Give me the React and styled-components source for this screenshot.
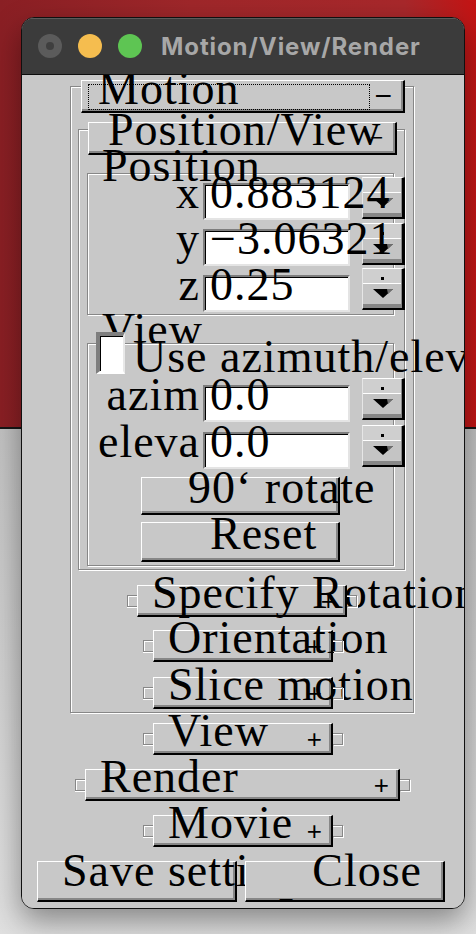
import React from 'react';
import styled, { createGlobalStyle } from 'styled-components';

const SERIF = `'Liberation Serif', 'Times New Roman', serif`;
const SANS = `'Liberation Sans', Arial, sans-serif`;

const GlobalStyle = createGlobalStyle`
  html, body { margin: 0; padding: 0; }
  body { background: #d0d0d0; }
  #root { width: 476px; height: 934px; }
`;

const Desktop = styled.div`
  width: 476px;
  height: 934px;
  box-sizing: border-box;
  padding: 17px 0 0 21px;
  overflow: hidden;
  background:
    linear-gradient(to bottom, transparent 427px, #161616 427px, #161616 429px, transparent 429px),
    linear-gradient(to bottom, transparent 429px, #c2c2c2 429px, #e0e0e0 934px),
    linear-gradient(to right, #8a1f24 0%, #9f272a 40%, #a8282b 85%, #c41414 100%);
`;

const Window = styled.div`
  width: 444px;
  height: 892px;
  box-sizing: border-box;
  border: 1px solid #101010;
  border-radius: 13px;
  overflow: hidden;
  background: #c8c8c8;
  display: flex;
  flex-direction: column;
  box-shadow: 0 12px 30px rgba(0, 0, 0, 0.4);
`;

const TitleBar = styled.div`
  height: 57px;
  flex: none;
  box-sizing: border-box;
  display: flex;
  align-items: center;
  gap: 16px;
  padding-left: 16px;
  background: #3b3b3b;
  border-bottom: 1px solid #0d0d0d;
  box-shadow: inset 0 1px 0 #5a5a5a;
`;

const Light = styled.span`
  flex: none;
  width: 24px;
  height: 24px;
  border-radius: 50%;
  background: ${(p) => p.$c};
  display: flex;
  align-items: center;
  justify-content: center;
`;

const LightDot = styled.span`
  width: 8px;
  height: 8px;
  border-radius: 50%;
  background: #3f3f3f;
`;

const Title = styled.span`
  margin-left: 3px;
  font-family: Inter, 'Open Sans', sans-serif;
  font-weight: 700;
  font-size: 24px;
  letter-spacing: 0.9px;
  color: #a7a7a7;
  white-space: nowrap;
`;

const Content = styled.div`
  flex: 1;
  display: flex;
  flex-direction: column;
  align-items: flex-start;
  overflow: hidden;
  background: #c8c8c8;
  font-family: ${SERIF};
  font-size: 46px;
  letter-spacing: 1px;
  color: #000;
`;

const Column = styled.div`
  flex: none;
  display: flex;
  flex-direction: column;
  align-items: flex-start;
  margin: ${(p) => p.$mt || 0}px 0 0 ${(p) => p.$ml || 0}px;
`;

const Frame = styled.div`
  flex: none;
  box-sizing: border-box;
  display: flex;
  flex-direction: column;
  align-items: flex-start;
  width: ${(p) => p.$w}px;
  height: ${(p) => p.$h}px;
  margin: ${(p) => p.$mt || 0}px 0 0 ${(p) => p.$ml || 0}px;
  border: 1px solid #878787;
  box-shadow: 1px 1px 0 #fff, inset 1px 1px 0 #fff;
`;

const Legend = styled.div`
  flex: none;
  height: 30px;
  line-height: 30px;
  padding-left: ${(p) => p.$pl}px;
  white-space: nowrap;
  ${(p) => (p.$raise ? 'position: relative; z-index: 2;' : '')}
`;

const Raised = styled.div`
  flex: none;
  box-sizing: border-box;
  display: flex;
  align-items: center;
  width: ${(p) => p.$w}px;
  height: ${(p) => p.$h}px;
  margin: ${(p) => p.$mt || 0}px 0 0 ${(p) => p.$ml || 0}px;
  padding: 0 ${(p) => p.$pr ?? 9}px 0 ${(p) => p.$pl ?? 15}px;
  background: #c8c8c8;
  border-style: solid;
  border-width: 1px 2px 2px 1px;
  border-color: #fff #000 #000 #fff;
  box-shadow: inset -2px -2px 0 #878787;
  white-space: nowrap;
  ${(p) => (p.$top ? 'position: relative; z-index: 1;' : '')}
`;

const Caption = styled.span`
  flex: 1 1 auto;
  min-width: 0;
  line-height: 20px;
  padding-bottom: ${(p) => p.$pb ?? 16}px;
  margin-left: ${(p) => p.$ml || 0}px;
  white-space: nowrap;
`;

const FocusRing = styled.div`
  flex: 1;
  align-self: stretch;
  display: flex;
  align-items: center;
  margin: 3px 4px 1px 6px;
  padding-left: 9px;
  border: 1px dotted #000;
`;

const Sign = styled.span`
  flex: none;
  font-family: ${SANS};
  font-size: ${(p) => p.$size || 26}px;
  letter-spacing: 0;
  line-height: 1;
`;

const Underscore = styled.span`
  flex: none;
  align-self: flex-end;
  font-family: ${SANS};
  font-size: 22px;
  letter-spacing: 0;
  line-height: 22px;
`;

const FieldRow = styled.div`
  flex: none;
  display: flex;
  align-items: flex-start;
  height: ${(p) => p.$h}px;
  margin-top: ${(p) => p.$mt || 0}px;
`;

const FieldLabel = styled.span`
  flex: none;
  width: 112px;
  text-align: right;
  line-height: 37px;
  white-space: nowrap;
`;

const Entry = styled.div`
  flex: none;
  position: relative;
  z-index: 1;
  box-sizing: border-box;
  width: 147px;
  height: 37px;
  margin: 9px 0 0 3px;
  padding: 0 5px;
  background: #fff;
  border: 2px solid;
  border-color: #7d7d7d #e4e4e4 #e4e4e4 #7d7d7d;
  box-shadow: inset 1px 1px 0 #000;
  line-height: 15px;
  white-space: nowrap;
`;

const Spin = styled.div`
  flex: none;
  box-sizing: border-box;
  width: 43px;
  height: 42px;
  margin: ${(p) => p.$mt}px 0 0 12px;
  display: flex;
  align-items: flex-start;
  justify-content: center;
  padding-top: 8px;
  background: linear-gradient(to bottom, #cfcfcf 0, #cfcfcf 14px, #fff 14px, #fff 15px, #c4c4c4 15px);
  border-style: solid;
  border-width: 1px 3px 2px 1px;
  border-color: #fff #000 #000 #e6e6e6;
  box-shadow: inset 0 -4px 0 #878787, inset -1px 0 0 #878787;
`;

const CheckRow = styled.div`
  flex: none;
  display: flex;
  align-items: flex-start;
  height: 43px;
  margin: -12px 0 0 8px;
`;

const CheckBox = styled.span`
  flex: none;
  box-sizing: border-box;
  width: 29px;
  height: 42px;
  background: #fff;
  border-style: solid;
  border-width: 4px 2px 3px 4px;
  border-color: #7e7e7e #e8e8e8 #fff #7e7e7e;
  box-shadow: inset 1px 1px 0 #000;
`;

const CheckLabel = styled.span`
  margin-left: 8px;
  height: 43px;
  line-height: 49px;
  white-space: nowrap;
`;

const Row = styled.div`
  flex: none;
  display: flex;
  align-items: center;
  margin: ${(p) => p.$mt || 0}px 0 0 ${(p) => p.$ml || 0}px;
  gap: ${(p) => p.$gap || 0}px;
`;

const Handle = styled.span`
  flex: none;
  width: 10px;
  height: 12px;
  box-sizing: border-box;
  border: 1px solid #878787;
  ${(p) =>
    p.$right
      ? 'border-left: none; box-shadow: 1px 1px 0 #fff, inset 0 1px 0 #fff;'
      : 'border-right: none; box-shadow: inset 1px 1px 0 #fff, 0 1px 0 #fff;'}
`;

const SpinArrow = () => (
  <svg width="22" height="24" viewBox="0 0 22 24">
    <rect x="9" y="0" width="3" height="3" fill="#000" />
    <polygon points="1,12 21,12 11,21" fill="#000" />
    <polygon points="15,12 21,12 16,17" fill="#6e6e6e" />
  </svg>
);

const Field = ({ label, value, h, spinTop }) => (
  <FieldRow $h={h}>
    <FieldLabel>{label}</FieldLabel>
    <Entry>{value}</Entry>
    <Spin $mt={spinTop}>
      <SpinArrow />
    </Spin>
  </FieldRow>
);

const Collapsed = ({ label, ml, mt, w, right = true }) => (
  <Row $ml={ml} $mt={mt}>
    <Handle />
    <Raised $w={w} $h={32} $pl={14} $pr={9}>
      <Caption>{label}</Caption>
      <Sign>+</Sign>
    </Raised>
    {right && <Handle $right />}
  </Row>
);

export default function App() {
  return (
    <>
      <GlobalStyle />
      <Desktop>
        <Window>
          <TitleBar>
            <Light $c="#5b5b5b">
              <LightDot />
            </Light>
            <Light $c="#f5bd4f" />
            <Light $c="#5ec553" />
            <Title>Motion/View/Render</Title>
          </TitleBar>
          <Content>
            <Column $ml={48} $mt={5}>
              <Raised $top $ml={11} $w={324} $h={33} $pl={0} $pr={11}>
                <FocusRing>
                  <Caption>Motion</Caption>
                </FocusRing>
                <Sign $size={30}>−</Sign>
              </Raised>
              <Frame $mt={-27} $w={344} $h={627}>
                <Raised $top $ml={17} $mt={35} $w={309} $h={33} $pl={19} $pr={12}>
                  <Caption>Position/View</Caption>
                  <Sign $size={22}>−</Sign>
                </Raised>
                <Frame $ml={7} $mt={-26} $w={327} $h={441}>
                  <Column $ml={8} $mt={21}>
                    <Legend $pl={15} $raise>Position</Legend>
                    <Frame $mt={-8} $w={307} $h={142}>
                      <Field label="x" value="0.883124" h={46} spinTop={3} />
                      <Field label="y" value="−3.06321" h={46} spinTop={3} />
                      <Field label="z" value="0.25" h={46} spinTop={2} />
                    </Frame>
                    <Legend $pl={15}>View</Legend>
                    <Frame $mt={-2} $w={307} $h={223}>
                      <CheckRow>
                        <CheckBox />
                        <CheckLabel>Use azimuth/elevation</CheckLabel>
                      </CheckRow>
                      <FieldRow $h={0} $mt={1} />
                      <Field label="azim" value="0.0" h={47} spinTop={2} />
                      <Field label="eleva" value="0.0" h={47} spinTop={2} />
                      <Raised $ml={53} $mt={7} $w={199} $h={38} $pl={46}>
                        <Caption>90‘ rotate</Caption>
                      </Raised>
                      <Raised $ml={53} $mt={7} $w={199} $h={40} $pl={68}>
                        <Caption>Reset</Caption>
                      </Raised>
                    </Frame>
                  </Column>
                </Frame>
                <Collapsed label="Specify Rotation" ml={56} mt={15} w={210} />
                <Collapsed label="Orientation" ml={72} mt={13} w={180} />
                <Collapsed label="Slice motion" ml={72} mt={15} w={180} />
              </Frame>
            </Column>
            <Collapsed label="View" ml={121} mt={10} w={180} />
            <Collapsed label="Render" ml={53} mt={14} w={315} />
            <Collapsed label="Movie" ml={121} mt={14} w={180} />
            <Row $ml={15} $mt={14} $gap={8}>
              <Raised $w={200} $h={41} $pl={24}>
                <Caption $pb={20}>Save settings</Caption>
              </Raised>
              <Raised $w={200} $h={41} $pl={34}>
                <Underscore>_</Underscore>
                <Caption $pb={20} $ml={20}>Close</Caption>
              </Raised>
            </Row>
          </Content>
        </Window>
      </Desktop>
    </>
  );
}
